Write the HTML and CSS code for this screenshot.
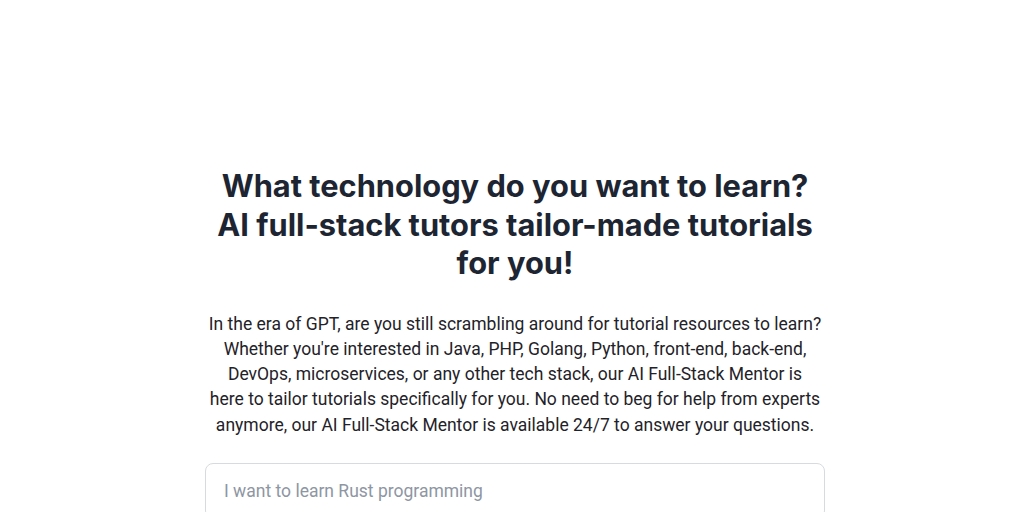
FILE: index.html
```html
<!DOCTYPE html>
<html>
<head>
  <title>AI Full-Stack Mentor</title>
  <link rel="stylesheet" href="styles.css">
</head>
<body>
  <div class="hero">
    <h1>What technology do you want to learn?<br>AI full-stack tutors tailor-made tutorials for you!</h1>
    <p class="intro">In the era of GPT, are you still scrambling around for tutorial resources to learn?<br>
      Whether you're interested in Java, PHP, Golang, Python, front-end, back-end,<br>
      DevOps, microservices, or any other tech stack, our AI Full-Stack Mentor is<br>
      here to tailor tutorials specifically for you. No need to beg for help from experts<br>
      anymore, our AI Full-Stack Mentor is available 24/7 to answer your questions.</p>
    <input class="topic-input" type="text" placeholder="I want to learn Rust programming">
  </div>
</body>
</html>
```

FILE: styles.css
```css
body {
  background-color: #fff;
  color: #1f2937;
  font-family: Roboto, "Noto Sans", sans-serif;
  margin: 0;
  padding: 0;
}

/* Main hero block */
.hero {
  width: 620px;
  margin: 0 auto;
  padding: 167px 0 0 6px;
  text-align: center;
}

.hero h1 {
  font-family: Inter, sans-serif;
  font-size: 30.8px;
  font-weight: 700;
  line-height: 38.5px;
  color: #1e2532;
  margin: 0 0 29px 0;
}

/* Intro paragraph, lines broken as in the design */
.intro {
  font-size: 17.5px;
  line-height: 25.3px;
  color: #1f2329;
  margin: 0 -12px 25px -12px;
  white-space: nowrap;
}

/* Search input */
.topic-input {
  display: block;
  box-sizing: border-box;
  width: 620px;
  height: 56px;
  padding: 0 18px;
  border: 1px solid #d7dbe0;
  border-radius: 8px;
  font-family: Roboto, sans-serif;
  font-size: 17.5px;
  color: #1f2937;
  outline: none;
}

.topic-input::placeholder {
  color: #8e96a3;
}
```
